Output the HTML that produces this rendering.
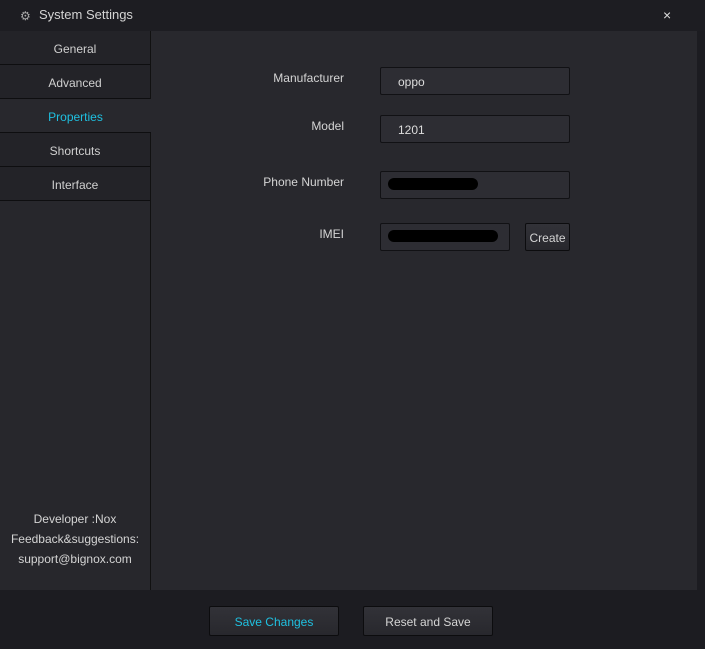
<!DOCTYPE html>
<html><head><style>
body{margin:0;width:705px;height:649px;background:#1c1c21;font-family:"Liberation Sans","DejaVu Sans",sans-serif;font-size:12px;color:#d4d4d4;position:relative;overflow:hidden}
.a{position:absolute}
.title{left:0;top:0;width:705px;height:31px;background:#1d1d22}
.side{left:0;top:31px;width:150px;height:559px;background:#27272c;border-right:1px solid #111}
.item{position:absolute;left:0;width:150px;height:33px;background:#232328;border-bottom:1px solid #0e0e10;text-align:center;line-height:37px;color:#d0d0d0}
.sel{background:#28282d;color:#1fc0e0;width:151px}
.content{left:151px;top:31px;width:546px;height:559px;background:#28282d}
.lbl{position:absolute;width:200px;text-align:right;color:#d4d4d4}
.in{position:absolute;background:#2d2d33;border:1px solid #111114;border-radius:2px;box-sizing:border-box;height:28px;line-height:28px;padding-left:17px;color:#ddd}
.blk{position:absolute;background:#000;border-radius:8px;height:12px}
.btn{position:absolute;background:linear-gradient(#323238,#28282d);border:1px solid #0c0c0e;border-radius:2px;box-sizing:border-box;text-align:center;color:#d4d4d4}
</style></head><body>
<div class="a title"></div>
<div class="a" style="left:20px;top:9px;color:#aaa;font-size:12px">⚙</div>
<div class="a" style="left:39px;top:7px;color:#d4d4d4;font-size:13px">System Settings</div>
<div class="a" style="left:663px;top:7px;color:#ddd;font-size:14px">×</div>
<div class="a side">
<div class="item" style="top:0">General</div>
<div class="item" style="top:34px">Advanced</div>
<div class="item sel" style="top:68px">Properties</div>
<div class="item" style="top:102px">Shortcuts</div>
<div class="item" style="top:136px">Interface</div>
<div class="a" style="left:0;width:150px;top:478px;text-align:center;line-height:20px;color:#d4d4d4">Developer :Nox<br>Feedback&amp;suggestions:<br>support@bignox.com</div>
</div>
<div class="a content"></div>
<div class="lbl" style="left:144px;top:71px">Manufacturer</div>
<div class="lbl" style="left:144px;top:119px">Model</div>
<div class="lbl" style="left:144px;top:175px">Phone Number</div>
<div class="lbl" style="left:144px;top:227px">IMEI</div>
<div class="in" style="left:380px;top:67px;width:190px">oppo</div>
<div class="in" style="left:380px;top:115px;width:190px">1201</div>
<div class="in" style="left:380px;top:171px;width:190px"></div>
<div class="blk" style="left:388px;top:178px;width:90px"></div>
<div class="in" style="left:380px;top:223px;width:130px"></div>
<div class="blk" style="left:388px;top:230px;width:110px"></div>
<div class="btn" style="left:525px;top:223px;width:45px;height:28px;line-height:28px">Create</div>
<div class="btn" style="left:209px;top:606px;width:130px;height:30px;line-height:30px;color:#1fc0e0">Save Changes</div>
<div class="btn" style="left:363px;top:606px;width:130px;height:30px;line-height:30px">Reset and Save</div>
</body></html>
